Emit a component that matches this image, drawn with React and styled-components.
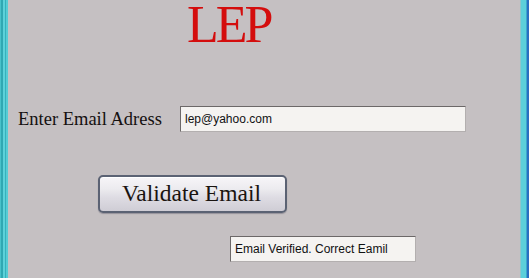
import React from "react";
import styled, { createGlobalStyle } from "styled-components";

const Global = createGlobalStyle`
  html, body { margin: 0; padding: 0; background: #c5c0c2; }
  #root { width: 529px; height: 278px; overflow: hidden; }
`;

const Frame = styled.div`
  display: grid;
  grid-template-columns: 8px 1fr 9px;
  width: 529px;
  height: 278px;
`;

const LeftEdge = styled.div`
  background: linear-gradient(
    to right,
    #47c2ca 0 1px,
    #2fa8b2 1px 3px,
    #5cd1d9 3px 5px,
    #36b1bb 5px 6px,
    #55ccd4 6px 8px
  );
`;

const RightEdge = styled.div`
  background: linear-gradient(
    to right,
    #8fc4cc 0 1px,
    #5ccfda 1px 6px,
    #3aa6cf 6px 7px,
    #2a6ec0 7px 9px
  );
`;

const Content = styled.div`
  background: #c5c0c2;
  display: flex;
  flex-direction: column;
`;

const Title = styled.h1`
  margin: 0;
  padding-left: 179px;
  font-family: "Liberation Serif", "Times New Roman", serif;
  font-weight: normal;
  font-size: 52px;
  line-height: 50px;
  letter-spacing: -3px;
  color: #d40d0d;
`;

const FieldRow = styled.div`
  display: flex;
  align-items: center;
  margin-top: 56px;
  padding-left: 10px;
`;

const Label = styled.label`
  width: 162px;
  font-family: "Liberation Serif", "Times New Roman", serif;
  font-size: 18.5px;
  line-height: 26px;
  color: #141010;
`;

const TextBox = styled.input`
  box-sizing: border-box;
  width: ${(p) => p.$w}px;
  height: 26px;
  margin: 0;
  padding: 0 0 0 4px;
  border: 1px solid;
  border-color: #6c6868 #b3afaf #b3afaf #6c6868;
  background: #f5f3f1;
  font-family: "Liberation Sans", Arial, sans-serif;
  font-size: 12px;
  color: #111;
  outline: none;
`;

const ButtonRow = styled.div`
  display: flex;
  margin-top: 43px;
  padding-left: 90px;
`;

const Button = styled.button`
  box-sizing: border-box;
  width: 189px;
  height: 38px;
  margin: 0;
  padding: 0 2px 2px 0;
  border: 2px solid #5b6273;
  border-radius: 5px;
  background: linear-gradient(
    to bottom,
    #f7f5f8 0%,
    #ecebef 35%,
    #dedce3 60%,
    #cfcdd5 100%
  );
  box-shadow: inset 0 1px 0 #ffffff, 0 1px 1px rgba(60, 60, 80, 0.35);
  font-family: "Liberation Serif", "Times New Roman", serif;
  font-size: 23.5px;
  color: #1a1410;
  display: flex;
  align-items: center;
  justify-content: center;
`;

const ResultRow = styled.div`
  display: flex;
  margin-top: 23px;
  padding-left: 222px;
`;

export default function App() {
  return (
    <>
      <Global />
      <Frame>
        <LeftEdge />
        <Content>
          <Title>LEP</Title>
          <FieldRow>
            <Label htmlFor="email">Enter Email Adress</Label>
            <TextBox id="email" $w={286} readOnly value="lep@yahoo.com" />
          </FieldRow>
          <ButtonRow>
            <Button type="button">Validate Email</Button>
          </ButtonRow>
          <ResultRow>
            <TextBox $w={186} readOnly value="Email Verified. Correct Eamil" />
          </ResultRow>
        </Content>
        <RightEdge />
      </Frame>
    </>
  );
}
